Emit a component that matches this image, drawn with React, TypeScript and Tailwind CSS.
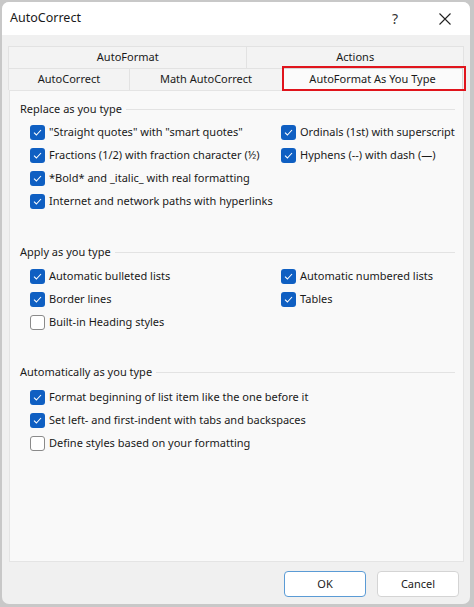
import React from "react";

const font = { fontFamily: '"Noto Sans", "Segoe UI", Arial, sans-serif' };

function Box({ checked }: { checked: boolean }) {
  if (checked) {
    return (
      <span className="w-[15px] h-[15px] rounded-[3px] bg-[#0f5fc2] flex items-center justify-center shrink-0">
        <svg width="9" height="7" viewBox="0 0 9 7">
          <path d="M1 3.6 L3.4 6 L8 1" fill="none" stroke="white" strokeWidth="1.1" />
        </svg>
      </span>
    );
  }
  return <span className="w-[15px] h-[15px] rounded-[3px] bg-white border border-[#8a8a8a] shrink-0" />;
}

function Item({ label, checked = true }: { label: string; checked?: boolean }) {
  return (
    <div className="h-[23px] flex items-center gap-[4px] text-[11px] text-[#1a1a1a] whitespace-nowrap">
      <Box checked={checked} />
      <span>{label}</span>
    </div>
  );
}

function Group({ title }: { title: string }) {
  return (
    <div className="flex items-center gap-[4px] h-[20px] text-[11px] text-[#1a1a1a] whitespace-nowrap">
      <span>{title}</span>
      <div className="flex-1 h-px bg-[#e3e3e3] mr-[8px]" />
    </div>
  );
}

export default function App() {
  return (
    <div className="w-[474px] h-[607px] bg-[#c8c8c8] pl-[2px] pt-[2px] overflow-hidden" style={font}>
      <div className="w-[468px] h-[602px] bg-[#f0f0f0] rounded-[7px] overflow-hidden flex flex-col">
        <div className="h-[33px] bg-white flex items-center shrink-0">
          <span className="ml-[8px] text-[12.5px] text-[#1a1a1a]">AutoCorrect</span>
          <span className="ml-auto w-[18px] text-center text-[14px] text-[#333] mr-[34px]">?</span>
          <svg width="14" height="14" viewBox="0 0 14 14" className="mr-[18px]">
            <path d="M1.5 1.5 L12.5 12.5 M12.5 1.5 L1.5 12.5" stroke="#222" strokeWidth="1.1" />
          </svg>
        </div>
        <div className="px-[6px] pt-[11px] flex flex-col flex-1">
          {/* tabs row 1 */}
          <div className="flex h-[22px] text-[11px] text-[#1a1a1a]">
            <div className="w-[239px] flex items-center justify-center bg-[#f3f3f3] border-t border-l border-[#e2e2e2]">AutoFormat</div>
            <div className="w-[218px] flex items-center justify-center bg-[#f3f3f3] border-t border-l border-r border-[#e2e2e2]">Actions</div>
          </div>
          {/* tabs row 2 */}
          <div className="flex h-[22px] text-[11px] text-[#1a1a1a] relative">
            <div className="w-[121px] flex items-center justify-center bg-[#f3f3f3] border-t border-l border-[#e2e2e2]">AutoCorrect</div>
            <div className="w-[153px] flex items-center justify-center bg-[#f3f3f3] border-t border-l border-[#e2e2e2]">Math AutoCorrect</div>
            <div className="w-[181px] flex items-center justify-center bg-[#fbfbfb] border-t border-l border-r border-[#d6d6d6]">AutoFormat As You Type</div>
            <div className="absolute left-[274px] top-[-2px] w-[184px] h-[25px] border-2 border-[#e0141c] pointer-events-none" />
          </div>
          {/* panel */}
          <div className="ml-[1px] w-[455px] h-[472px] bg-[#f9f9f9] border border-[#e4e4e4] pl-[10px] pt-[8px]">
            <Group title="Replace as you type" />
            <div className="flex mt-[2px]">
              <div className="w-[261px] pl-[10px]">
                <Item label={'"Straight quotes" with "smart quotes"'} />
                <Item label="Fractions (1/2) with fraction character (½)" />
                <Item label="*Bold* and _italic_ with real formatting" />
                <Item label="Internet and network paths with hyperlinks" />
              </div>
              <div>
                <Item label="Ordinals (1st) with superscript" />
                <Item label="Hyphens (--) with dash (—)" />
              </div>
            </div>
            <div className="mt-[29px]">
              <Group title="Apply as you type" />
            </div>
            <div className="flex mt-[3px]">
              <div className="w-[261px] pl-[10px]">
                <Item label="Automatic bulleted lists" />
                <Item label="Border lines" />
                <Item label="Built-in Heading styles" checked={false} />
              </div>
              <div>
                <Item label="Automatic numbered lists" />
                <Item label="Tables" />
              </div>
            </div>
            <div className="mt-[28px]">
              <Group title="Automatically as you type" />
            </div>
            <div className="pl-[10px] mt-[4px]">
              <Item label="Format beginning of list item like the one before it" />
              <Item label="Set left- and first-indent with tabs and backspaces" />
              <Item label="Define styles based on your formatting" checked={false} />
            </div>
          </div>
          <div className="flex justify-end gap-[11px] mt-[9px] mr-[5px] text-[11px] text-[#1a1a1a]">
            <div className="w-[82px] h-[26px] flex items-center justify-center bg-white border border-[#5b9bd5] rounded-[4px]">OK</div>
            <div className="w-[82px] h-[26px] flex items-center justify-center bg-white border border-[#d4d4d4] rounded-[4px]">Cancel</div>
          </div>
        </div>
      </div>
    </div>
  );
}
